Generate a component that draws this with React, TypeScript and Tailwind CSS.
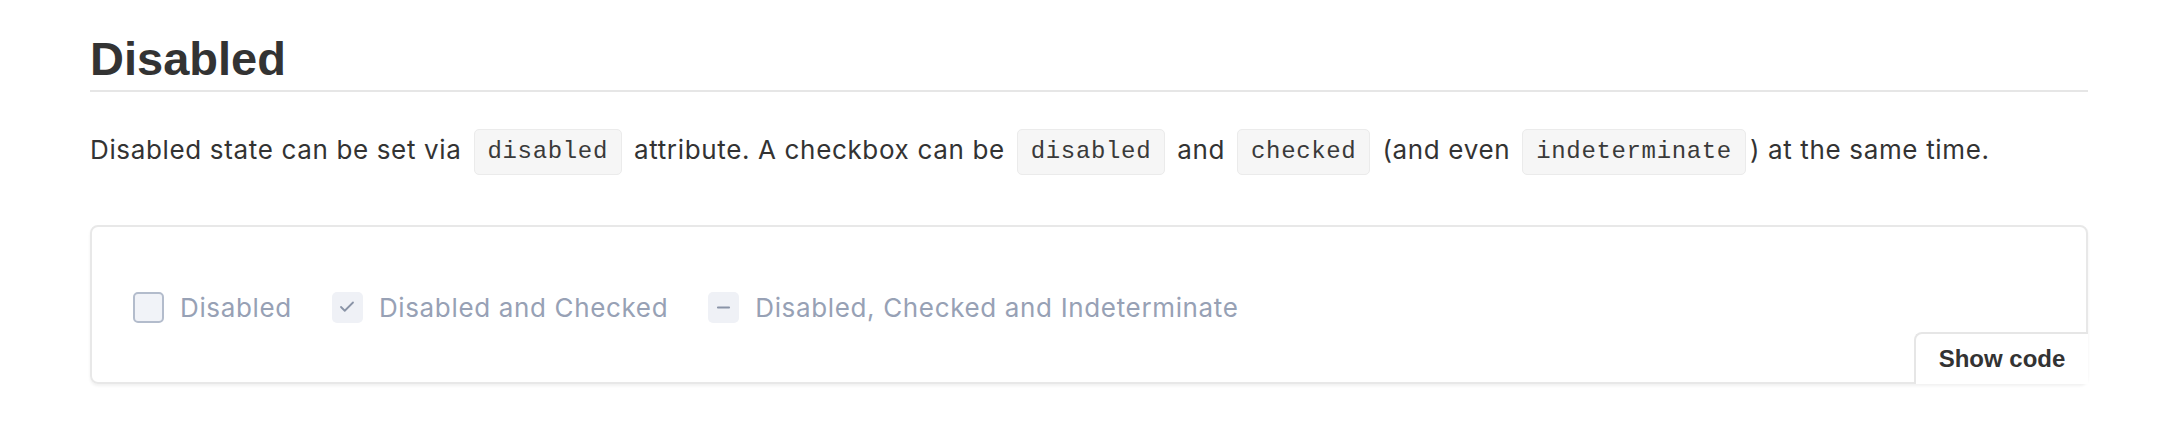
import { Check, Minus } from 'lucide-react';

function Code({ children, last }: { children: string; last?: boolean }) {
    return (
        <code
            className={
                last
                    ? "ml-[12px] mr-[4px] inline-block rounded-[5px] border border-[#ebebeb] bg-[#f6f6f6] px-[13px] py-[5px] align-middle font-['Liberation_Mono',monospace] text-[24px] leading-[34px] text-[#3a3a3a]"
                    : "mx-[12px] inline-block rounded-[5px] border border-[#ebebeb] bg-[#f6f6f6] px-[13px] py-[5px] align-middle font-['Liberation_Mono',monospace] text-[24px] leading-[34px] text-[#3a3a3a]"
            }
        >
            {children}
        </code>
    );
}

function Box({ state }: { state: 'off' | 'on' | 'mixed' }) {
    if (state === 'off') {
        return <span className="h-[31px] w-[31px] shrink-0 rounded-[5px] border-2 border-[#b3bccc] bg-[#f1f3f8]" />;
    }
    return (
        <span className="flex h-[31px] w-[31px] shrink-0 items-center justify-center rounded-[5px] bg-[#eff1f6] text-[#8a94a7]">
            {state === 'on' ? <Check size={18} strokeWidth={2.4} /> : <Minus size={19} strokeWidth={2.6} />}
        </span>
    );
}

export default function App() {
    const items: { label: string; state: 'off' | 'on' | 'mixed' }[] = [
        { label: 'Disabled', state: 'off' },
        { label: 'Disabled and Checked', state: 'on' },
        { label: 'Disabled, Checked and Indeterminate', state: 'mixed' },
    ];

    return (
        <div className="min-h-screen bg-white px-[90px] pt-[30px] text-[#333]">
            <h2 className="border-b-2 border-[#e6e6e6] pb-[2px] font-['Liberation_Sans',Arial,sans-serif] text-[47px] font-bold leading-[58px] text-[#333]">
                Disabled
            </h2>
            <p className="mt-[35px] font-['Inter',sans-serif] text-[26px] leading-[46px] tracking-[0.025em] text-[#333]">
                Disabled state can be set via<Code>disabled</Code>attribute. A checkbox can be<Code>disabled</Code>and
                <Code>checked</Code>(and even<Code last>indeterminate</Code>) at the same time.
            </p>
            <div className="relative mt-[50px] h-[159px] rounded-[8px] border-2 border-[#e8e8e8] shadow-[0_2px_3px_rgba(0,0,0,0.06)]">
                <div className="flex h-full items-center gap-[40px] pl-[41px] pt-[6px]">
                    {items.map((item) => (
                        <label
                            key={item.label}
                            className="flex items-center gap-[16px] font-['Inter',sans-serif] text-[26px] tracking-[0.025em] text-[#97a1b5]"
                        >
                            <Box state={item.state} />
                            {item.label}
                        </label>
                    ))}
                </div>
                <button className="absolute -bottom-[2px] -right-[2px] h-[52px] w-[174px] rounded-tl-[8px] border-2 border-b-0 border-r-0 border-[#e6e6e6] bg-white font-['Liberation_Sans',Arial,sans-serif] text-[24px] font-bold text-[#333]">
                    Show code
                </button>
            </div>
        </div>
    );
}
